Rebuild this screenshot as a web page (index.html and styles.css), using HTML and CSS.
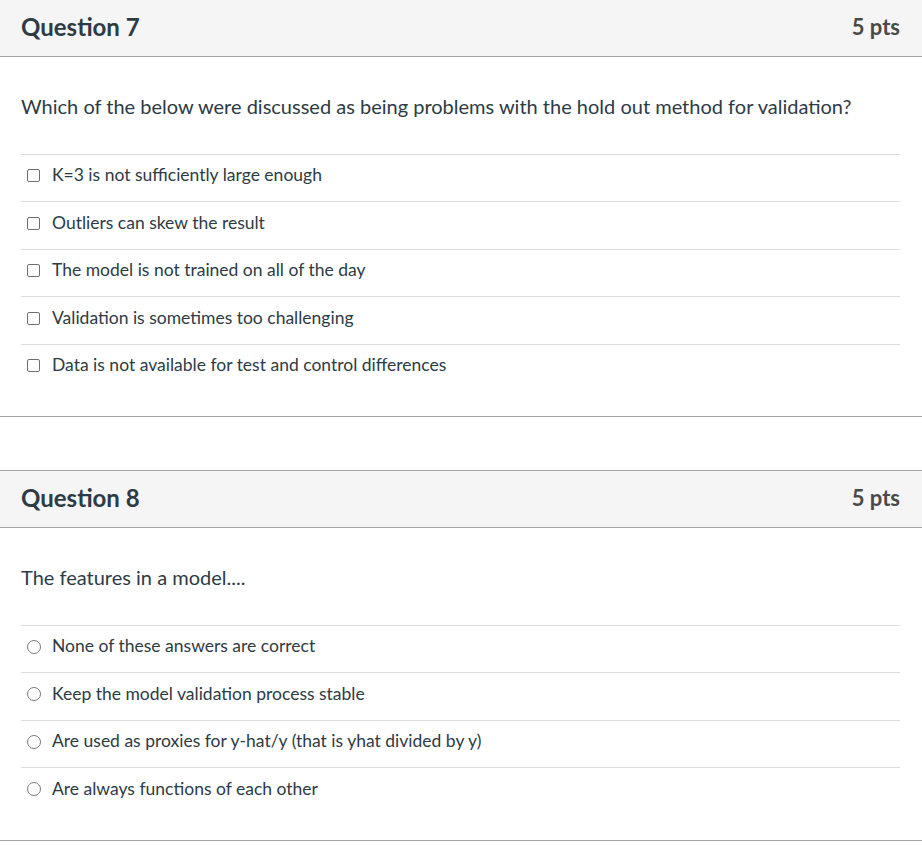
FILE: index.html
```html
<!DOCTYPE html>
<html>
<head>
<meta charset="utf-8">
<link rel="stylesheet" href="styles.css">
</head>
<body>
<div class="question first">
  <div class="q-header">
    <span class="q-title">Question 7</span>
    <span class="q-pts">5 pts</span>
  </div>
  <div class="q-body">
    <p class="q-text">Which of the below were discussed as being problems with the hold out method for validation?</p>
    <div class="answers">
      <label class="answer"><span class="box"></span>K=3 is not sufficiently large enough</label>
      <label class="answer"><span class="box"></span>Outliers can skew the result</label>
      <label class="answer"><span class="box"></span>The model is not trained on all of the day</label>
      <label class="answer"><span class="box"></span>Validation is sometimes too challenging</label>
      <label class="answer"><span class="box"></span>Data is not available for test and control differences</label>
    </div>
  </div>
</div>
<div class="question">
  <div class="q-header">
    <span class="q-title">Question 8</span>
    <span class="q-pts">5 pts</span>
  </div>
  <div class="q-body">
    <p class="q-text">The features in a model....</p>
    <div class="answers">
      <label class="answer"><span class="radio"></span>None of these answers are correct</label>
      <label class="answer"><span class="radio"></span>Keep the model validation process stable</label>
      <label class="answer"><span class="radio"></span>Are used as proxies for y-hat/y (that is yhat divided by y)</label>
      <label class="answer"><span class="radio"></span>Are always functions of each other</label>
    </div>
  </div>
</div>
</body>
</html>
```
FILE: styles.css
```css
html, body {
  margin: 0;
  padding: 0;
  background: #fff;
}
body {
  font-family: Lato, "Open Sans", sans-serif;
  color: #2d3b45;
  width: 922px;
}
.question {
  border-top: 1px solid #a5a5a5;
  border-bottom: 1px solid #a5a5a5;
  margin-top: 53px;
}
.question.first {
  border-top: none;
  margin-top: 0;
}
.q-header {
  background: #f5f5f5;
  border-bottom: 1px solid #a5a5a5;
  display: flex;
  align-items: center;
  justify-content: space-between;
  padding: 0 22px 0 21px;
  box-sizing: border-box;
  height: 57px;
}
.q-title {
  font-size: 24px;
  font-weight: 700;
  color: #2d3b45;
  margin-top: -3px;
}
.q-pts {
  font-size: 22px;
  font-weight: 700;
  color: #4a4a4a;
  margin-top: -4px;
}
.q-body {
  padding: 0 22px 25px 21px;
}
.q-text {
  margin: 0;
  padding-top: 36px;
  padding-bottom: 33.5px;
  font-size: 20px;
  line-height: 27px;
}
.answers {
  display: flex;
  flex-direction: column;
}
.answer {
  display: flex;
  align-items: center;
  border-top: 1px solid #dcdcdc;
  font-size: 17.5px;
  padding-left: 6px;
  padding-bottom: 6px;
  box-sizing: content-box;
  height: 40.5px;
}
.box {
  width: 11px;
  height: 11px;
  border: 1px solid #6f6f6f;
  border-radius: 2px;
  margin-right: 12px;
  margin-top: 2px;
  flex: none;
}
.radio {
  width: 12px;
  height: 12px;
  border: 1px solid #7a7a7a;
  border-radius: 50%;
  margin-right: 11px;
  margin-top: 2px;
  flex: none;
}
```
